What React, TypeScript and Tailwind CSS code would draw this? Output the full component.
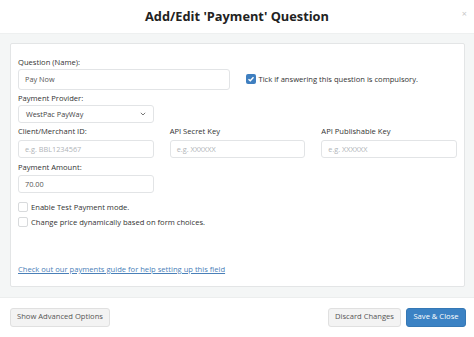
import React from "react";

const font = { fontFamily: '"Open Sans", "Noto Sans", Arial, sans-serif' };

function Label({ children, mb = "mb-[3px]" }: { children: React.ReactNode; mb?: string }) {
  return <div className={`text-[7.6px] leading-[10px] text-[#333] ${mb}`}>{children}</div>;
}

function Input({ value, placeholder, h = "h-[18px]" }: { value?: string; placeholder?: string; h?: string }) {
  return (
    <div className={`${h} border border-[#e2e4e6] rounded-[3px] bg-white px-[6px] flex items-center text-[7.3px]`}>
      {value ? <span className="text-[#555]">{value}</span> : <span className="text-[#b0b4b8]">{placeholder}</span>}
    </div>
  );
}

function Check({ checked, label }: { checked?: boolean; label: string }) {
  return (
    <div className="flex items-center gap-[3px] h-[10px]">
      {checked ? (
        <div className="w-[10px] h-[10px] rounded-[2px] bg-[#3f7fc0] flex items-center justify-center">
          <svg width="8" height="8" viewBox="0 0 8 8"><path d="M1.5 4.2 L3.3 5.8 L6.5 2.2" stroke="white" strokeWidth="1.4" fill="none" /></svg>
        </div>
      ) : (
        <div className="w-[10px] h-[10px] rounded-[2px] border border-[#d8dadc] bg-white" />
      )}
      <span className="text-[7.6px] leading-[10px] text-[#333]">{label}</span>
    </div>
  );
}

export default function App() {
  return (
    <div className="w-[474px] h-[337px] bg-white flex flex-col overflow-hidden" style={font}>
      <div className="h-[34px] shrink-0 relative flex items-center justify-center border-b border-[#eef0f0]">
        <div className="text-[12.8px] font-bold text-[#222] mt-[1px]">Add/Edit 'Payment' Question</div>
        <div className="absolute right-[7px] top-[7px] text-[9px] text-[#c8c8c8]">×</div>
      </div>
      <div className="h-[264px] shrink-0 bg-[#f4f6f6] pl-[10px] pr-[9px] pt-[9px] pb-[10px] border-b border-[#eceeee]">
        <div className="h-full bg-white border border-[#e3e5e6] rounded-[2px] px-[7px] pt-[13px] flex flex-col">
          <div className="grid grid-cols-2 gap-x-[16px]">
            <div>
              <Label mb="mb-[2px]">Question (Name):</Label>
              <Input value="Pay Now" h="h-[21px]" />
            </div>
            <div className="flex items-end pb-[6px]">
              <Check checked label="Tick if answering this question is compulsory." />
            </div>
          </div>
          <div className="mt-[3px]">
            <Label mb="mb-[2px]">Payment Provider:</Label>
            <div className="w-[136px] h-[18px] border border-[#e2e4e6] rounded-[3px] px-[7px] flex items-center justify-between text-[7.3px] text-[#444]">
              <span>WestPac PayWay</span>
              <svg width="6" height="4" viewBox="0 0 6 4"><path d="M0.8 0.8 L3 3 L5.2 0.8" stroke="#777" strokeWidth="1" fill="none" /></svg>
            </div>
          </div>
          <div className="grid grid-cols-3 gap-x-[16px] mt-[3px]">
            <div>
              <Label mb="mb-[4px]">Client/Merchant ID:</Label>
              <Input placeholder="e.g. BBL1234567" />
            </div>
            <div>
              <Label mb="mb-[4px]">API Secret Key</Label>
              <Input placeholder="e.g. XXXXXX" />
            </div>
            <div>
              <Label mb="mb-[4px]">API Publishable Key</Label>
              <Input placeholder="e.g. XXXXXX" />
            </div>
          </div>
          <div className="mt-[4px] w-[136px]">
            <Label mb="mb-[3px]">Payment Amount:</Label>
            <Input value="70.00" />
          </div>
          <div className="mt-[9px] flex flex-col gap-[5px]">
            <Check label="Enable Test Payment mode." />
            <Check label="Change price dynamically based on form choices." />
          </div>
          <div className="mt-[37px] text-[7.6px] leading-[10px] text-[#4a80b8] underline">
            Check out our payments guide for help setting up this field
          </div>
        </div>
      </div>
      <div className="flex-1 flex items-center justify-between pl-[10px] pr-[8px] pb-[1px]">
        <div className="h-[19px] w-[100px] justify-center flex items-center bg-[#f3f3f3] border border-[#e0e0e0] rounded-[3px] text-[7.6px] text-[#555]">Show Advanced Options</div>
        <div className="flex gap-[5px]">
          <div className="h-[19px] w-[73px] justify-center flex items-center bg-[#f3f3f3] border border-[#e0e0e0] rounded-[3px] text-[7.6px] text-[#555]">Discard Changes</div>
          <div className="h-[19px] w-[60px] justify-center flex items-center bg-[#3b82c4] border border-[#3578b5] rounded-[3px] text-[7.6px] text-white">Save &amp; Close</div>
        </div>
      </div>
    </div>
  );
}
